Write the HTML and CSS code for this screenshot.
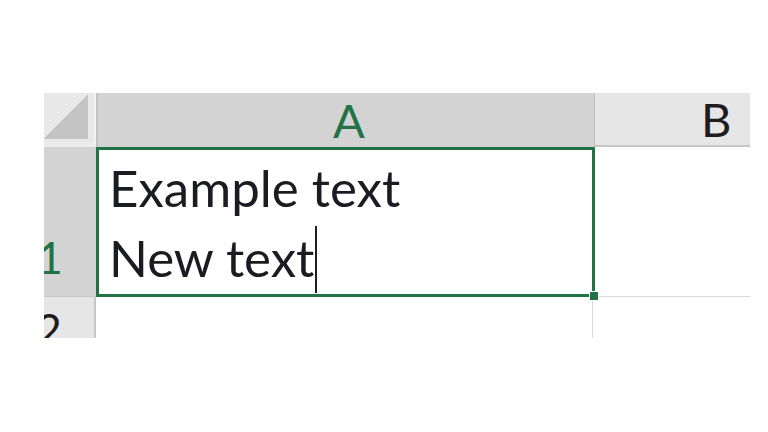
FILE: index.html
```html
<!DOCTYPE html>
<html lang="en">
<head>
  <meta charset="UTF-8">
  <title>Wrap text in a cell</title>
  <link rel="stylesheet" href="styles.css">
</head>
<body>

  <div class="sheet">
    <div class="grid">
      <div class="corner"><div class="corner-tri"></div></div>
      <div class="col-head selected"><span>A</span></div>
      <div class="col-head last">B</div>

      <div class="row-head selected">1</div>
      <div class="cell active">
        <div>Example text</div>
        <div>New text<span class="caret"></span></div>
        <div class="fill-handle"></div>
      </div>
      <div class="cell"></div>

      <div class="row-head second">2</div>
      <div class="cell gridline-right"></div>
      <div class="cell"></div>
    </div>
  </div>

</body>
</html>
```

FILE: styles.css
```css
body {
  margin: 0;
  background-color: #ffffff;
  font-family: Lato, "Open Sans", sans-serif;
}

.sheet {
  margin: 93px 0 0 44px;
  width: 706px;
  height: 245px;
  overflow: hidden;
}

.grid {
  display: grid;
  grid-template-columns: 92px 499px 155px;
  grid-template-rows: 54px 150px 60px;
  margin-left: -40px;
}

.corner {
  background-color: #e8e8e8;
  border-right: 2px solid #f2f2f2;
  border-bottom: 5px solid #ececec;
  display: flex;
  justify-content: flex-end;
  align-items: flex-start;
  padding: 2px 6px 0 0;
  box-sizing: border-box;
}

.corner-tri {
  width: 45px;
  height: 44px;
  background: linear-gradient(to bottom right, transparent 50%, #c4c4c4 50%);
}

.col-head {
  display: flex;
  justify-content: center;
  align-items: center;
  font-size: 47px;
  color: #1d1d1d;
  background-color: #e6e6e6;
  border-bottom: 2px solid #c6c6c6;
  box-sizing: border-box;
}

.col-head.selected {
  background-color: #d3d3d3;
  color: #217346;
  border-left: 2px solid #c4c4c4;
  border-right: 1px solid #bfbfbf;
  border-bottom: none;
}

.col-head.selected span {
  padding-left: 6px;
}

.col-head.last {
  justify-content: flex-start;
  padding-left: 106px;
}

.row-head {
  display: flex;
  justify-content: center;
  align-items: flex-end;
  font-size: 44px;
  line-height: 1;
  padding-bottom: 17px;
  color: #1d1d1d;
  background-color: #e6e6e6;
  border-right: 2px solid #c8c8c8;
  box-sizing: border-box;
}

.row-head.selected {
  background-color: #d3d3d3;
  color: #217346;
  border-right: none;
  border-bottom: 1px solid #c8c8c8;
}

.row-head.second {
  align-items: flex-start;
  padding: 10px 0 0 0;
}

.cell {
  box-sizing: border-box;
  border-bottom: 1px solid #d9d9d9;
}

.cell.gridline-right {
  border-right: 1px solid #d9d9d9;
  border-bottom: none;
  margin-right: 2px;
}

.cell.active {
  position: relative;
  border: 3px solid #217346;
  padding: 3px 0 0 10px;
  font-size: 51px;
  line-height: 70px;
  color: #1b1b22;
}

.caret {
  display: inline-block;
  width: 0;
  height: 67px;
  border-left: 2px solid #1e1e1e;
  margin-left: 1px;
  vertical-align: -16px;
}

.fill-handle {
  position: absolute;
  right: -7px;
  bottom: -7px;
  width: 8px;
  height: 8px;
  background-color: #217346;
  border: 1px solid #ffffff;
}
```
